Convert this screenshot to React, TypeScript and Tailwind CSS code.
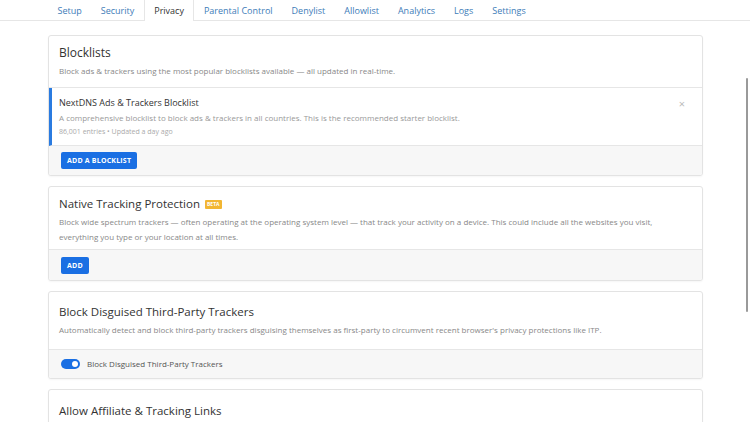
import React from "react";

const TABS = ["Setup", "Security", "Privacy", "Parental Control", "Denylist", "Allowlist", "Analytics", "Logs", "Settings"];

const Card: React.FC<{ children: React.ReactNode }> = ({ children }) => (
  <section className="bg-white border border-[#e3e3e3] rounded-[3px] shadow-[0_1px_2px_rgba(0,0,0,0.04)] overflow-hidden">{children}</section>
);

const BlueButton: React.FC<{ label: string }> = ({ label }) => (
  <button className="bg-[#1a6fe3] text-white text-[7px] font-bold tracking-[0.2px] rounded-[2px] h-[17px] px-[6px] leading-none">{label}</button>
);

const App: React.FC = () => {
  return (
    <div className="w-[750px] h-[422px] overflow-hidden bg-white relative" style={{ fontFamily: '"Open Sans", "Noto Sans", sans-serif' }}>
      {/* Tab bar */}
      <header className="h-[21px] border-b border-[#e6e6e6] flex pl-[48px]">
        {TABS.map((tab) => (
          <div
            key={tab}
            className={`h-[21px] px-[9.5px] flex items-center text-[9px] ${tab === "Privacy" ? "bg-white border-x border-[#e6e6e6] text-[#333] -mb-px" : "text-[#3d7cb8]"}`}>
            {tab}
          </div>
        ))}
      </header>

      <main className="w-[655px] ml-[48px] mt-[14px] flex flex-col gap-[10px]">
        {/* Blocklists */}
        <Card>
          <div className="px-[10px] pt-[8px] pb-[9px] border-b border-[#e6e6e6]">
            <h2 className="text-[12px] text-[#333] leading-[18px]">Blocklists</h2>
            <p className="text-[8px] text-[#888] leading-[14px] mt-[2px]">Block ads &amp; trackers using the most popular blocklists available — all updated in real-time.</p>
          </div>
          <div className="relative border-l-[3px] border-[#2a7be0] pl-[7px] pr-[10px] h-[58px] flex flex-col justify-center border-b border-b-[#e6e6e6]">
            <div className="text-[9px] text-[#333] leading-[14px]">NextDNS Ads &amp; Trackers Blocklist</div>
            <div className="text-[8px] text-[#999] leading-[15px]">A comprehensive blocklist to block ads &amp; trackers in all countries. This is the recommended starter blocklist.</div>
            <div className="text-[7px] text-[#aaa] leading-[13px]">86,001 entries • Updated a day ago</div>
            <span className="absolute right-[17px] top-[10px] text-[11px] text-[#bbb] leading-none">×</span>
          </div>
          <div className="bg-[#f7f7f7] h-[29px] flex items-center px-[12px]">
            <BlueButton label="ADD A BLOCKLIST" />
          </div>
        </Card>

        {/* Native Tracking Protection */}
        <Card>
          <div className="px-[10px] pt-[8px] pb-[5px] border-b border-[#e6e6e6]">
            <h2 className="text-[11.5px] text-[#333] leading-[18px] flex items-center gap-[5px]">
              Native Tracking Protection
              <span className="bg-[#f2b632] text-white text-[5px] font-bold rounded-[1px] px-[2px] h-[9px] leading-[9px]">BETA</span>
            </h2>
            <p className="text-[8px] text-[#888] leading-[15px] mt-[1px]">
              Block wide spectrum trackers — often operating at the operating system level — that track your activity on a device. This could include all the websites you visit, everything you type or your location at all times.
            </p>
          </div>
          <div className="bg-[#f7f7f7] h-[30px] flex items-center px-[12px]">
            <BlueButton label="ADD" />
          </div>
        </Card>

        {/* Block Disguised Third-Party Trackers */}
        <Card>
          <div className="px-[10px] pt-[11px] pb-[12px] border-b border-[#e6e6e6]">
            <h2 className="text-[11.5px] text-[#333] leading-[18px]">Block Disguised Third-Party Trackers</h2>
            <p className="text-[8px] text-[#888] leading-[14px] mt-[2px]">Automatically detect and block third-party trackers disguising themselves as first-party to circumvent recent browser's privacy protections like ITP.</p>
          </div>
          <div className="bg-[#f7f7f7] h-[28px] flex items-center px-[12px] gap-[7px]">
            <span className="w-[19px] h-[10px] rounded-full bg-[#1a6fe3] flex items-center justify-end pr-[2px]">
              <span className="w-[6px] h-[6px] rounded-full bg-white" />
            </span>
            <span className="text-[8px] text-[#555]">Block Disguised Third-Party Trackers</span>
          </div>
        </Card>

        {/* Allow Affiliate */}
        <Card>
          <div className="px-[10px] pt-[12px] pb-[30px]">
            <h2 className="text-[11.5px] text-[#333] leading-[18px]">Allow Affiliate &amp; Tracking Links</h2>
          </div>
        </Card>
      </main>

      {/* scrollbar thumb */}
      <div className="absolute right-[2px] top-[78px] w-[2px] h-[234px] bg-[#9a9a9a] rounded-full" />
    </div>
  );
};

export default App;
